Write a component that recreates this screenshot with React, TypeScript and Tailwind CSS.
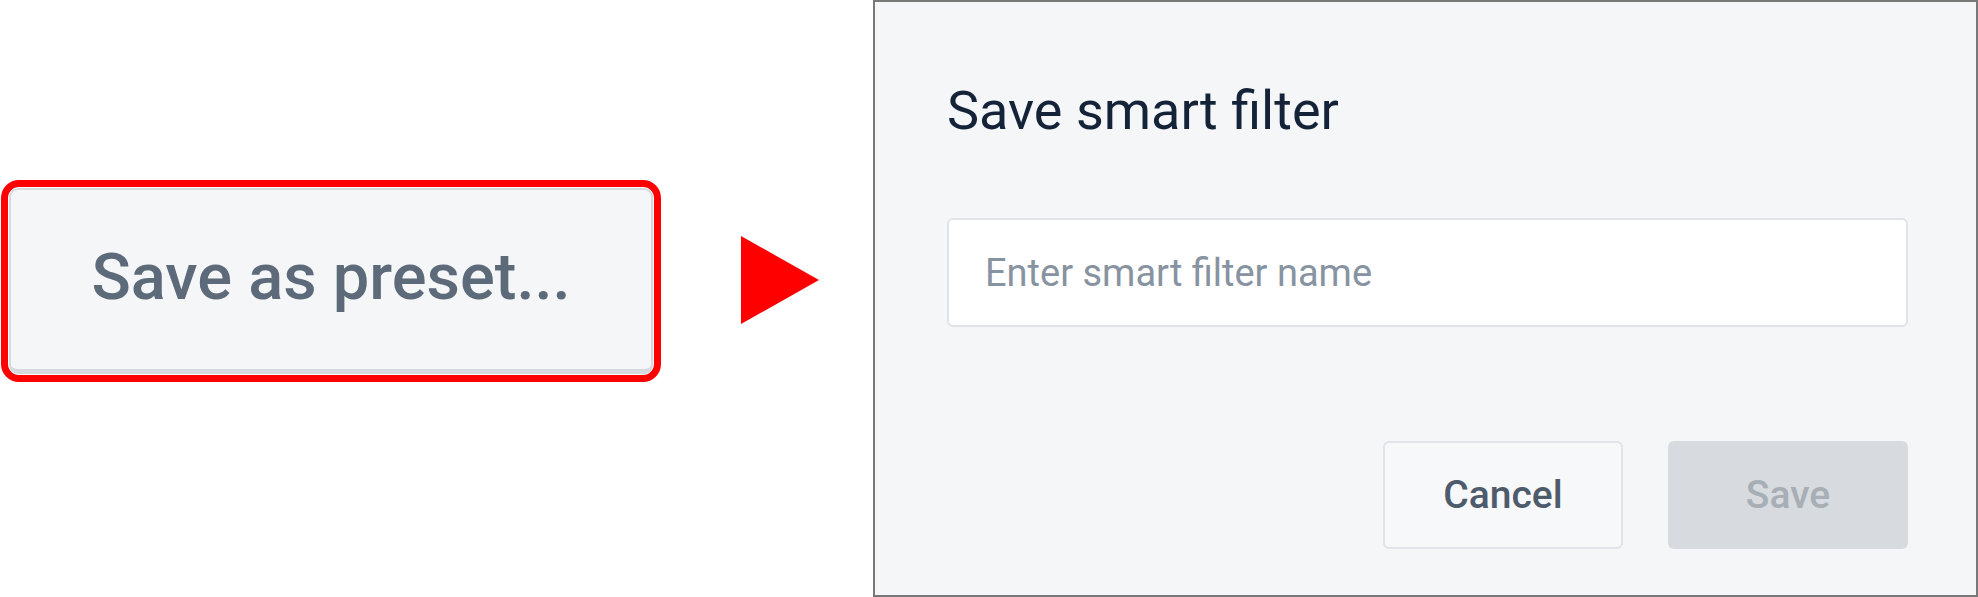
export default function App() {
  return (
    <div
      className="flex h-[597px] w-[1978px] items-start bg-white"
      style={{ fontFamily: 'Roboto, "Liberation Sans", sans-serif' }}
    >
      {/* trigger button, outlined in red */}
      <div className="ml-[1px] mt-[180px] h-[202px] w-[660px] shrink-0 rounded-[18px] border-[7px] border-[#ff0000] p-[1px]">
        <button className="flex h-full w-full items-center justify-center rounded-[9px] border-2 border-b-[5px] border-[#d6d9de] bg-[#f5f6f8] pb-[4px] text-[65px] font-medium text-[#5d6a79]">
          Save as preset...
        </button>
      </div>

      {/* arrow */}
      <svg className="ml-[80px] mt-[236px] shrink-0" width="78" height="88" viewBox="0 0 78 88">
        <polygon points="0,0 78,44 0,88" fill="#ff0000" />
      </svg>

      {/* dialog */}
      <div className="ml-[54px] flex h-[597px] w-[1105px] shrink-0 flex-col border-2 border-[#787878] bg-[#f5f6f8] pl-[72px] pr-[68px] pt-[82px]">
        <h2 className="text-[54px] leading-[54px] font-normal text-[#142338]">Save smart filter</h2>

        <input
          className="mt-[80px] h-[109px] w-full rounded-[6px] border-2 border-[#e0e3e7] bg-white pl-[36px] text-[38px] text-[#142338] outline-none placeholder:text-[#8793a1]"
          placeholder="Enter smart filter name"
        />

        <div className="mt-[114px] flex justify-end gap-[45px]">
          <button className="h-[108px] w-[240px] rounded-[6px] border-2 border-[#e0e3e7] bg-[#f7f8fa] text-[39px] font-medium text-[#4d5b6a]">
            Cancel
          </button>
          <button className="h-[108px] w-[240px] rounded-[6px] bg-[#d7dadf] text-[39px] font-medium text-[#a7aeb6]">
            Save
          </button>
        </div>
      </div>
    </div>
  );
}
